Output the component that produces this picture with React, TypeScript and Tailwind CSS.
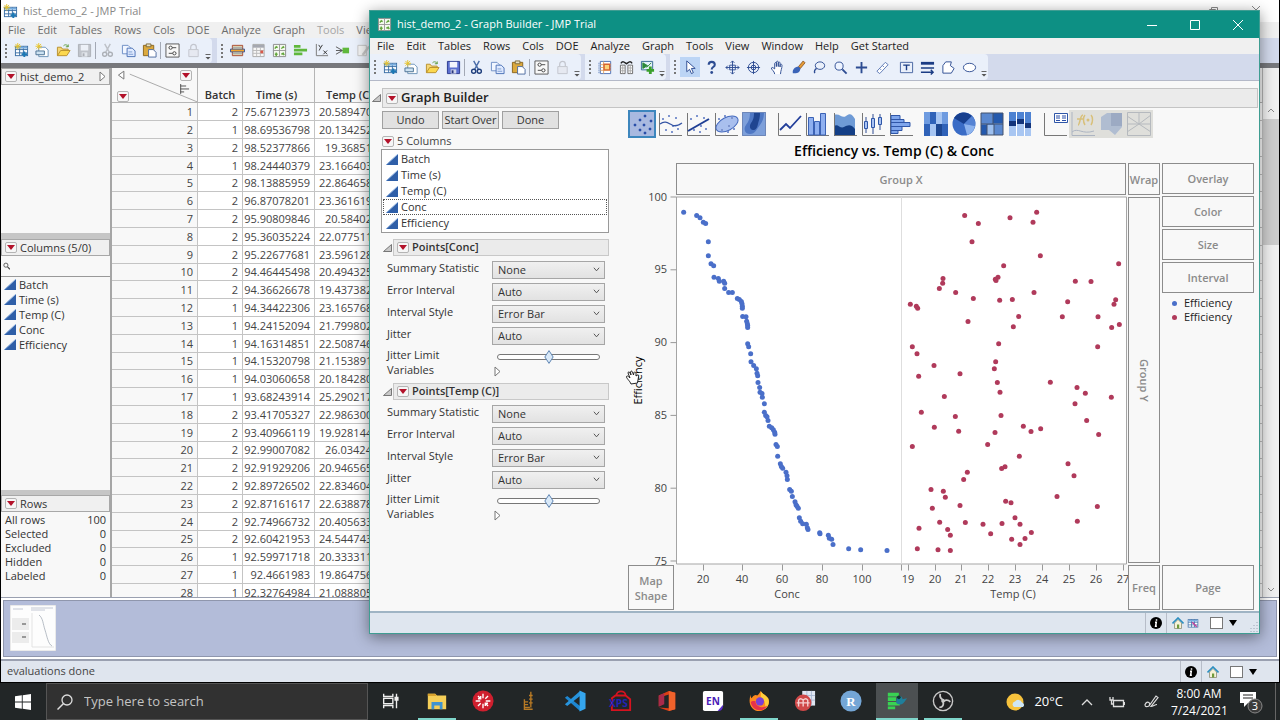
/**
 * JMP desktop: data table window with a Graph Builder window on top,
 * and the Windows taskbar below.
 */

import { clsx } from "clsx";
import type { ReactNode } from "react";

/* ------------------------------------------------------------------ data */

const COLUMNS = ["Batch", "Time (s)", "Temp (C)", "Conc", "Efficiency"];

const ROWS: [number, string, string][] = [
	[2, "75.67123973", "20.589470"],
	[1, "98.69536798", "20.134252"],
	[2, "98.52377866", "19.36851"],
	[1, "98.24440379", "23.166403"],
	[2, "98.13885959", "22.864658"],
	[2, "96.87078201", "23.361619"],
	[2, "95.90809846", "20.58402"],
	[2, "95.36035224", "22.077511"],
	[2, "95.22677681", "23.596128"],
	[2, "94.46445498", "20.494325"],
	[2, "94.36626678", "19.437382"],
	[1, "94.34422306", "23.165768"],
	[1, "94.24152094", "21.799802"],
	[1, "94.16314851", "22.508746"],
	[1, "94.15320798", "21.153891"],
	[1, "94.03060658", "20.184280"],
	[1, "93.68243914", "25.290217"],
	[2, "93.41705327", "22.986300"],
	[2, "93.40966119", "19.928144"],
	[2, "92.99007082", "26.03424"],
	[2, "92.91929206", "20.946565"],
	[2, "92.89726502", "22.834604"],
	[2, "92.87161617", "22.638878"],
	[2, "92.74966732", "20.405633"],
	[2, "92.60421953", "24.544743"],
	[1, "92.59971718", "20.333311"],
	[1, "92.4661983", "19.864756"],
	[1, "92.32764984", "21.088805"],
];

const ROW_COUNTS: [string, number][] = [
	["All rows", 100],
	["Selected", 0],
	["Excluded", 0],
	["Hidden", 0],
	["Labeled", 0],
];

const MENUS = ["File", "Edit", "Tables", "Rows", "Cols", "DOE", "Analyze", "Graph", "Tools", "View", "Window", "Help", "Get Started"];

// Marker positions, three units to a pixel, measured from the panel's corner.
const CONC_POINTS = [
	[41, 65], [80, 75], [90, 82], [100, 95], [107, 99], [115, 154], [115, 196], [123, 220], [131, 226],
	[132, 260], [145, 264], [148, 272], [161, 272], [164, 278], [164, 294], [176, 306], [187, 306],
	[202, 324], [208, 327], [214, 333], [216, 340], [217, 347], [217, 353], [218, 378], [228, 379],
	[230, 392], [232, 400], [233, 405], [233, 411], [233, 460], [236, 469], [242, 490], [243, 514],
	[251, 525], [259, 535], [261, 548], [263, 556], [264, 576], [269, 591], [270, 605], [276, 609],
	[277, 620], [283, 640], [283, 665], [287, 675], [291, 679], [294, 690], [298, 707], [305, 712],
	[310, 718], [314, 725], [315, 731], [318, 762], [322, 768], [323, 797], [331, 820], [334, 828],
	[338, 833], [348, 845], [351, 856], [352, 867], [359, 897], [364, 902], [367, 918], [375, 934],
	[378, 943], [381, 947], [385, 953], [388, 982], [392, 992], [398, 1000], [409, 1001], [412, 1012],
	[414, 1017], [449, 1027], [450, 1030], [475, 1034], [478, 1043], [485, 1046], [489, 1062],
	[536, 1075], [572, 1078], [651, 1080],
];

const TEMP_POINTS = [
	[209, 75], [250, 99], [345, 82], [414, 95], [425, 65], [231, 154], [436, 196], [326, 226], [671, 220],
	[144, 264], [143, 278], [133, 294], [182, 306], [309, 260], [301, 266], [303, 270], [541, 272],
	[588, 273], [417, 306], [235, 324], [314, 329], [352, 327], [518, 334], [662, 328], [657, 341],
	[46, 341], [64, 347], [68, 353], [371, 378], [502, 379], [609, 379], [219, 393], [355, 409],
	[673, 402], [650, 411], [52, 469], [311, 460], [608, 469], [66, 490], [302, 514], [117, 525],
	[298, 535], [195, 550], [71, 557], [307, 576], [466, 575], [546, 591], [315, 605], [571, 608],
	[148, 618], [649, 620], [540, 640], [79, 665], [318, 675], [181, 678], [575, 690], [118, 710],
	[385, 707], [437, 715], [191, 722], [300, 726], [408, 723], [611, 732], [52, 768], [278, 762],
	[373, 797], [519, 820], [320, 834], [330, 829], [217, 845], [537, 856], [206, 867], [108, 897],
	[145, 902], [151, 920], [486, 918], [332, 932], [348, 937], [195, 945], [607, 948], [112, 953],
	[360, 982], [134, 995], [211, 996], [264, 1001], [321, 999], [375, 1001], [547, 992], [72, 1013],
	[158, 1017], [287, 1030], [166, 1034], [409, 1026], [390, 1044], [350, 1046], [375, 1062],
	[67, 1075], [129, 1078], [166, 1080],
];

/* ----------------------------------------------------------- small parts */

function RedTriangle({ label }: { label: string }) {
	return (
		<button type="button" aria-label={label} className="flex h-[11px] w-[12px] shrink-0 items-center justify-center rounded-[2px] border border-[#b4b4b4] bg-[#f6f6f6]">
			<svg viewBox="0 0 8 5" className="h-[5px] w-[8px]">
				<path d="M0 0h8L4 5z" fill="#b3122a" />
			</svg>
		</button>
	);
}

function Continuous() {
	return (
		<svg viewBox="0 0 12 11" className="h-[11px] w-[12px] shrink-0">
			<path d="M0 11 12 0v11z" fill="#2f5fa8" />
			<path d="M0 11 12 0" stroke="#8fb0dc" />
		</svg>
	);
}

function Disclosure() {
	return (
		<svg viewBox="0 0 9 8" className="h-[8px] w-[9px] shrink-0">
			<path d="M.5 7.5h8V.5z" fill="#c9c9c9" stroke="#777" />
		</svg>
	);
}

function RightTriangle({ flip = false }: { flip?: boolean }) {
	return (
		<svg viewBox="0 0 7 11" className={clsx("h-[11px] w-[7px] shrink-0", flip && "rotate-180")}>
			<path d="M1 1v9l5-4.5z" fill="#fff" stroke="#777" />
		</svg>
	);
}

/* ---------------------------------------------------------- toolbar icons */

const Grid = (
	<>
		<rect x="1.5" y="3.5" width="13" height="10" fill="#fff" stroke="#3a6ea5" />
		<path d="M1.5 7h13M1.5 10.500h13M6 3.500v10M10 3.500v10" stroke="#3a6ea5" />
		<path d="M2 4h12v2H2z" fill="#78aee0" />
	</>
);
const Spark = <path d="M4 0v7M.5 3.500h7M1.500 1l5 5M6.500 1l-5 5" stroke="#e8c32c" />;

const GLYPHS: Record<string, ReactNode> = {
	newTable: <>{Grid}<path d="M11 9v6m-3-3h6" stroke="#1b78b5" strokeWidth="2" />{Spark}</>,
	newScript: (
		<>
			<path d="M4 4.500h7l3 3v7H4z" fill="#fff" stroke="#6d93b8" />
			<path d="M1 8.500h9v4H1z" fill="#cde2f2" stroke="#4b7193" />
			{Spark}
		</>
	),
	open: (
		<>
			<path d="M1.500 13.500v-9h4l1.500 2h6v3" fill="#f5d778" stroke="#b8902d" />
			<path d="M1.500 13.500 5 8h10l-3.500 5.500z" fill="#fbd84f" stroke="#b8902d" />
			<path d="M8 3c2-2 4-1 5 1m0 0V1.500M13 4h-2.500" stroke="#5a9a3a" />
		</>
	),
	save: (
		<>
			<path d="M1.500 1.500h13v13h-13z" fill="#5b6fd0" stroke="#2b3a8e" />
			<path d="M4 2h8v6H4z" fill="#f3f5fd" />
			<path d="M5 10h6v4.500H5z" fill="#cfd5ea" />
			<path d="M6 11h2v3H6z" fill="#27357c" />
		</>
	),
	cut: (
		<>
			<path d="m5 1 5 9M11 1 6 10" stroke="#4a6da8" strokeWidth="1.500" />
			<circle cx="5" cy="12" r="2.200" stroke="#1f3f7d" strokeWidth="1.500" />
			<circle cx="11" cy="12" r="2.200" stroke="#1f3f7d" strokeWidth="1.500" />
		</>
	),
	copy: (
		<>
			<path d="M1.500 2.500h6l2.500 2.500v6.500H1.500z" fill="#f1f6ff" stroke="#6c8cc4" />
			<path d="M6.500 5.500h5.500l3 3v6H6.500z" fill="#dfeaff" stroke="#4a70b5" />
			<path d="M8 9.500h4M8 12h5" stroke="#7c9bd0" />
		</>
	),
	paste: (
		<>
			<path d="M1.500 2.500h11v11h-11z" fill="#dba93e" stroke="#8a641d" />
			<path d="M4.500 1h5v3h-5z" fill="#e9e2c6" stroke="#7c6a3a" />
			<path d="M7 7h5l3 3v5H7z" fill="#fff" stroke="#4f6c9f" />
		</>
	),
	prefs: (
		<>
			<path d="M1 1h14v14H1z" fill="#f8f8f8" stroke="#555" />
			<path d="M4 5h8M4 11h8" stroke="#444" />
			<circle cx="6" cy="5" r="1.700" fill="#fff" stroke="#444" />
			<circle cx="10" cy="11" r="1.700" fill="#fff" stroke="#444" />
		</>
	),
	lock: (
		<>
			<path d="M5 7V4.500a3 3 0 0 1 6 0V7" stroke="#c3c6ce" strokeWidth="1.300" />
			<path d="M3 7h10v7.500H3z" fill="#e6e9f1" stroke="#c3c6ce" />
		</>
	),
	rows: (
		<>
			<path d="M2.500 2.500h11v11h-11z" fill="#f6e7b4" stroke="#a5452e" />
			<path d="M.500 6.500h15v3H.500z" fill="#f3a52d" stroke="#34549a" />
			<path d="M3 4.500h10M3 11.500h10" stroke="#8a93a8" />
		</>
	),
	calc: (
		<>
			<path d="M2 1.500h12v13H2z" fill="#f7f7f7" stroke="#a9a9a9" />
			<path d="M2 2h12v3H2z" fill="#a5a8b1" />
			<path d="M2 8h12M2 11h12M6 5v9M10 5v9" stroke="#bbb" />
			<path d="M10 8h3v3h-3z" fill="#d8594a" />
		</>
	),
	panels: (
		<>
			<path d="M1.500 1.500h13v13h-13z" fill="#f4f9ef" stroke="#8c8c8c" />
			<path d="M8 1v14M1 8h14" stroke="#999" />
			<path d="M3 6l1.500-2L6 5M10 6l2-2 1 1M3 12h3M4.500 10v4M10 12l2-1 1 2" stroke="#63a63d" strokeWidth="1.500" />
		</>
	),
	bars: <path d="M1 2h7v3H1zM1 6h14v3H1zM1 10h9v3H1z" fill="#5fb83c" />,
	yByX: (
		<>
			<path d="M2.500 1v12.500H15" stroke="#777" />
			<path d="m5 2 2 3 2-3M7 5 5.500 8M10 8l4 4M14 8l-4 4" stroke="#333" />
		</>
	),
	fan: (
		<>
			<path d="M1 4l7 4-7 4M1 8h7" stroke="#555" />
			<path d="M8 5h7v6H8z" fill="#5fb83c" />
		</>
	),
	pencil: (
		<>
			<path d="M2 2.500h9v11H2z" fill="#f4f4f4" stroke="#c4c4c4" />
			<path d="m6 12 7-9 2 1.500-7 9z" fill="#c8c8c8" />
		</>
	),
	summary: (
		<>
			<path d="M2.500 1.500h11v13h-11z" fill="#fff" stroke="#4b6fb3" />
			<path d="M2.500 5h11M2.500 8h11M2.500 11h11M6 1.500v13" stroke="#e0a86a" />
			<path d="M6.500 4.500h6v6h-6z" fill="#fbd27a" stroke="#d8632f" strokeWidth="1.500" />
			<path d="M1 3v11" stroke="#4b6fb3" strokeDasharray="1 1" />
		</>
	),
	columns: (
		<>
			<path d="M1.500 5.500h5v9h-5zM9.500 5.500h5v9h-5z" fill="#fff" stroke="#666" />
			<path d="M4 5.500v9M12 5.500v9M1.500 8.500h5M9.500 8.500h5M1.500 11.500h5M9.500 11.500h5" stroke="#aaa" />
			<path d="M2 3.500c2-3 4-1 6 .500 2-1.500 4-3.500 6-.500" stroke="#222" strokeWidth="1.500" />
		</>
	),
	addGraph: (
		<>
			<path d="M1.500 1.500h12v9h-12z" fill="#e4f2fb" stroke="#356a91" />
			<path d="m3 3 5 3-5 3zM12 3 7 8" fill="#2c8a3a" stroke="#2c8a3a" />
			<path d="M11 7v8M7 11h8" stroke="#3aa02c" strokeWidth="3" />
		</>
	),
	arrow: <path d="M4 1v11.500l3-2.500 2 4.500 2-1-2-4.500h4z" fill="#fff" stroke="#2d4c92" />,
	help: (
		<>
			<path d="M5 5c0-4 6.500-4 6.500 0 0 2.500-3.300 2.500-3.300 5" stroke="#2d4c92" strokeWidth="2.200" />
			<circle cx="8.200" cy="13.300" r="1.500" fill="#2d4c92" />
		</>
	),
	move: <path d="M8 1v14M1 8h14M6 3l2-2 2 2M6 13l2 2 2-2M3 6 1 8l2 2M13 6l2 2-2 2M5 5.500h6v5H5z" stroke="#2d4c92" />,
	target: (
		<>
			<circle cx="8" cy="8" r="5.500" stroke="#2d4c92" />
			<circle cx="8" cy="8" r="2.500" stroke="#2d4c92" />
			<path d="M8 1v14M1 8h14" stroke="#2d4c92" />
		</>
	),
	hand: <path d="M5 15c0-3-4-5-3.500-6.500C2.500 7 4 9 5 9.500V3.500c.500-1 1.500-1 1.800 0V7 2c.500-1 1.700-1 2 0v5V3c.500-1 1.700-1 1.900 0v4.500l.200-2.500c.700-1 1.700-.500 1.900.500 0 4-1.300 5-1.600 9.500" fill="#fff" stroke="#2d4c92" />,
	brush: (
		<>
			<path d="m8 7 5-6 2 2-5 6z" fill="#e59b36" stroke="#7d4a1c" strokeWidth=".800" />
			<path d="M2 14c-1-3 2-7 6-7l2 2c0 4-4 6-8 5z" fill="#3b64b8" />
		</>
	),
	lasso: (
		<>
			<ellipse cx="8.500" cy="6" rx="5" ry="4" stroke="#2d4c92" />
			<path d="M5 9c-2 1-3 3-2 5" stroke="#2d4c92" strokeWidth="1.500" />
		</>
	),
	zoom: (
		<>
			<circle cx="6.500" cy="6.500" r="4.300" fill="#eef4ff" stroke="#2d4c92" />
			<path d="m10 10 4.500 4.500" stroke="#2d4c92" strokeWidth="2" />
		</>
	),
	plus: <path d="M8 2v12M2 8h12" stroke="#2d4c92" strokeWidth="2" />,
	ruler: <path d="m2 12 9-9.500 3 2.500-9 9.500zM5 9l1.500 1.500M8 6l1.500 1.500" fill="#fff" stroke="#5c79b5" />,
	line: (
		<>
			<path d="M1 2h14v3H1z" fill="#1b3c84" />
			<path d="M1 8.500h14M1 13h13m-2.500-2.500L14 13l-2.500 2.500" stroke="#1b3c84" strokeWidth="1.500" />
		</>
	),
	polygon: <path d="M2 14V6l3-4h6l-1 4 4 3-3 5z" fill="#fff" stroke="#2d4c92" />,
	ellipse: <ellipse cx="8" cy="8" rx="6.500" ry="4.500" fill="#fff" stroke="#2d4c92" />,
	textBox: (
		<>
			<path d="M1.500 2.500h13v11h-13z" fill="#eaf0fb" stroke="#4563a0" />
			<path d="M4.500 5.500h7M8 5.500V11" stroke="#1b3c84" strokeWidth="1.500" />
		</>
	),
};

function Glyph({ name, faded = false }: { name: string; faded?: boolean }) {
	return (
		<svg viewBox="0 0 16 16" fill="none" className={clsx("h-[15px] w-[15px]", faded && "opacity-35 grayscale")}>
			{GLYPHS[name]}
		</svg>
	);
}

function Tool({ name, faded, active }: { name: string; faded?: boolean; active?: boolean }) {
	return (
		<button
			type="button"
			aria-label={name}
			className={clsx("flex h-[20px] w-[20px] shrink-0 items-center justify-center", active && "bg-[#bcd5f5]")}
		>
			<Glyph name={name} faded={faded} />
		</button>
	);
}

function ToolStrip({ children }: { children: ReactNode }) {
	return (
		<div className="flex h-full shrink-0 items-center gap-px rounded-r bg-[#eaf0fa] pl-[3px]">
			<svg viewBox="0 0 4 14" className="mr-[2px] h-[14px] w-[4px]">
				<path d="M2 0v14" stroke="#777" strokeWidth="2" strokeDasharray="2 2" />
			</svg>
			{children}
			<svg viewBox="0 0 8 8" className="mb-[2px] h-[8px] w-[8px] self-end">
				<path d="M1.500 1.500h5" stroke="#666" />
				<path d="M1.500 4h5L4 6.500z" fill="#555" />
			</svg>
		</div>
	);
}

function Divider() {
	return <span className="h-[17px] w-px shrink-0 bg-[#a3a9b5]" />;
}

function FileTools({ faded = false }: { faded?: boolean }) {
	return (
		<ToolStrip>
			<Tool name="newTable" />
			<Tool name="newScript" />
			<Tool name="open" />
			<Tool name="save" faded={faded} />
			<Divider />
			<Tool name="cut" faded={faded} />
			<Tool name="copy" />
			<Tool name="paste" />
			<Divider />
			<Tool name="prefs" />
			<Tool name="lock" />
		</ToolStrip>
	);
}

function MenuBar({ menus, dimmed = false }: { menus: string[]; dimmed?: boolean }) {
	return (
		<nav className={clsx("flex h-[16px] shrink-0 items-center gap-[12px] overflow-hidden bg-[#f0f0f0] px-[7px] text-[11px]", dimmed ? "text-[#6d6d6d]" : "text-[#222]")}>
			{menus.map((m) => (
				<button key={m} type="button" className={clsx("shrink-0", dimmed && m === "Tools" && "text-[#a5a5a5]")}>
					{m}
				</button>
			))}
		</nav>
	);
}

function StatusIcons({ withTable = false }: { withTable?: boolean }) {
	return (
		<div className="flex h-full items-center">
			<span className="flex h-full w-[22px] items-center justify-center border-x border-[#b7bdc8]">
				<svg viewBox="0 0 12 12" className="h-[12px] w-[12px]">
					<circle cx="6" cy="6" r="6" fill="#000" />
					<path d="M6.500 2.200v1.600M5 5.200h1.300L5.600 9.300h1.300" stroke="#fff" strokeWidth="1.500" fill="none" />
				</svg>
			</span>
			<svg viewBox="0 0 12 12" className="ml-[5px] h-[12px] w-[12px]">
				<path d="M2.500 6v5.500h7V6L6 2.500z" fill="#f5f2d8" stroke="#8b8d76" strokeWidth=".800" />
				<path d="M.500 6.500 6 1l5.500 5.500" fill="none" stroke="#2d8fc0" strokeWidth="1.600" />
				<path d="M5 7.500h2.200v4H5z" fill="#6e9a3a" />
			</svg>
			{withTable && (
				<svg viewBox="0 0 16 16" fill="none" className="ml-[3px] h-[12px] w-[12px]">
					{Grid}
					<path d="m7 7 6 6" stroke="#c2409a" strokeWidth="2" />
				</svg>
			)}
			<span className="ml-[11px] h-[12px] w-[13px] border border-[#777] bg-white" />
			<svg viewBox="0 0 8 6" className="ml-[6px] h-[6px] w-[8px]">
				<path d="M0 0h8L4 6z" />
			</svg>
		</div>
	);
}

/* ------------------------------------------------------ data table window */

function PanelHeader({ title, children }: { title: string; children?: ReactNode }) {
	return (
		<div className="flex h-[17px] shrink-0 items-center gap-[3px] border border-[#a8a8a8] bg-[#f0f0f0] px-[3px] text-[#333]">
			<RedTriangle label={`${title} menu`} />
			<span className="flex-1">{title}</span>
			{children}
		</div>
	);
}

function SidePanels() {
	return (
		<aside className="flex w-[111px] shrink-0 flex-col border-r-2 border-[#a6a6a6] bg-[#f8f8f8] text-[11px] leading-[14px] text-[#333]">
			<section className="h-[165px] shrink-0">
				<PanelHeader title="hist_demo_2">
					<RightTriangle />
				</PanelHeader>
			</section>
			<section className="flex min-h-0 flex-1 flex-col border-t-[6px] border-[#c6c6c6]">
				<PanelHeader title="Columns (5/0)" />
				<label className="flex h-[21px] items-center border-b border-[#999] pl-[2px]">
					<svg viewBox="0 0 9 9" fill="none" stroke="#444" className="h-[8px] w-[8px]">
						<circle cx="3.500" cy="3.500" r="2.500" />
						<path d="m5.500 5.500 3 3" strokeWidth="1.500" />
					</svg>
					<input aria-label="Filter columns" className="w-full bg-transparent outline-none" />
				</label>
				<ul>
					{COLUMNS.map((c) => (
						<li key={c} className="flex h-[15px] items-center gap-[3px] pl-[3px]">
							<Continuous />
							{c}
						</li>
					))}
				</ul>
			</section>
			<section className="h-[107px] shrink-0 border-t-[5px] border-[#c6c6c6]">
				<PanelHeader title="Rows" />
				<dl className="px-[4px] pt-px">
					{ROW_COUNTS.map(([k, n]) => (
						<div key={k} className="flex justify-between">
							<dt>{k}</dt>
							<dd>{n}</dd>
						</div>
					))}
				</dl>
			</section>
		</aside>
	);
}

function DataGrid() {
	const head = "h-[35px] border-b border-r border-[#b5b5b5] bg-[#f8f8f8] p-0 align-bottom font-semibold";
	const cell = "border-b border-r border-[#c4c4c4] py-0 text-right";
	return (
		<div className="min-w-0 flex-1 overflow-hidden bg-white">
			<table className="w-full table-fixed border-separate border-spacing-0 text-[11px] leading-[14px] text-[#444]">
				<colgroup>
					<col className="w-[86px]" />
					<col className="w-[45px]" />
					<col className="w-[72px]" />
					<col />
				</colgroup>
				<thead className="text-[#333]">
					<tr>
						<th className={head}>
							<div className="relative h-[34px]">
								<svg viewBox="0 0 86 34" className="absolute inset-0 h-full w-full" fill="none">
									<path d="M18 6 86 34" stroke="#aaa" />
									<path d="M12 3v8L6.500 7z" fill="#fff" stroke="#777" />
									<path d="M69.500 16v10M69 18h6M69 21h9M69 24h4" stroke="#555" />
								</svg>
								<span className="absolute left-[68px] top-[2px] flex"><RedTriangle label="Columns menu" /></span>
								<span className="absolute bottom-0 left-[5px] flex"><RedTriangle label="Rows menu" /></span>
							</div>
						</th>
						<th className={head}>Batch</th>
						<th className={clsx(head, "pr-[4px]!")}>Time (s)</th>
						<th className={clsx(head, "pl-[11px]! text-left")}>Temp (C)</th>
					</tr>
				</thead>
				<tbody>
					{ROWS.map(([batch, time, temp], i) => (
						<tr key={time} className="h-[18px] nth-[5n]:h-[17px]">
							<td className={clsx(cell, "bg-[#f8f8f8] pr-[4px]")}>{i + 1}</td>
							<td className={clsx(cell, "pr-[4px]")}>{batch}</td>
							<td className={clsx(cell, "pr-[4px]")}>{time}</td>
							<td className={clsx(cell, "text-left!", temp.length < 9 ? "pl-[10px]" : "pl-[4px]")}>{temp}</td>
						</tr>
					))}
				</tbody>
			</table>
		</div>
	);
}

function ScrollBar() {
	return (
		<div className="flex w-[16px] shrink-0 flex-col items-center bg-[#f0f0f0] pt-[40px] pb-[5px]">
			<svg viewBox="0 0 8 5" fill="none" className="h-[5px] w-[8px]"><path d="m1 4 3-3 3 3" stroke="#888" /></svg>
			<span className="mt-[6px] h-[126px] w-full bg-[#cdcdcd]" />
			<svg viewBox="0 0 8 5" fill="none" className="mt-auto h-[5px] w-[8px]"><path d="m1 1 3 3 3-3" stroke="#888" /></svg>
		</div>
	);
}

function TableWindow() {
	return (
		<section className="flex min-h-0 flex-1 flex-col border-x border-black bg-white">
			<header className="flex h-[22px] shrink-0 items-center gap-[5px] pl-[2px] text-[11px] text-[#888]">
				<Glyph name="newTable" />
				<h1>hist_demo_2 - JMP Trial</h1>
				<svg viewBox="0 0 54 12" fill="none" stroke="#888" className="mr-[17px] ml-auto h-[12px] w-[54px]">
					<path d="M1.500 4.500h6v6h-6zM3.500 4V2.500h6v6H8M44 1l8 8M52 1l-8 8" />
				</svg>
			</header>
			<MenuBar menus={MENUS.slice(0, 10)} dimmed />
			<div className="flex h-[25px] shrink-0 items-center gap-[5px] overflow-hidden bg-[#d3daec]">
				<FileTools faded />
				<ToolStrip>
					<Tool name="rows" />
					<Tool name="calc" />
					<Tool name="panels" />
					<Tool name="bars" />
					<Tool name="yByX" />
					<Tool name="fan" />
					<Tool name="pencil" />
				</ToolStrip>
			</div>
			<div className="h-[5px] shrink-0 bg-[#77787c]" />
			<div className="flex min-h-0 flex-1">
				<SidePanels />
				<DataGrid />
				<ScrollBar />
			</div>
			<div className="h-[63px] shrink-0 border-y border-[#9aa0b0] bg-white p-[2px]">
				<div className="h-full border border-[#8f96ad] bg-[#b3bcd9] px-[6px] py-[4px]">
					<svg viewBox="0 0 46 46" className="h-[46px] w-[46px]">
						<path d="M0 0h46v46H0z" fill="#fdfdfd" stroke="#d6d6d6" />
						<path d="M2 13h17v12H2zM2 27h17v11H2z" fill="#ececec" />
						<path d="M22 8v34h22" fill="none" stroke="#e3e3e3" />
						<path d="M3 4h10M21 3h22M21 5h14" stroke="#c3c8d4" />
						<path d="M12 19h4M12 32h4" stroke="#444" />
						<path d="M29 10c4 3 4 9 6 15s3 14 7 16" fill="none" stroke="#9aa2ae" strokeWidth=".700" />
					</svg>
				</div>
			</div>
			<footer className="flex h-[22px] shrink-0 items-center justify-between border-t border-[#9aa0b0] bg-[#dfe5ee] pr-[22px] pl-[6px] text-[11px] text-[#444]">
				<span>evaluations done</span>
				<StatusIcons />
			</footer>
		</section>
	);
}

/* --------------------------------------------------- graph element palette */

const AXES = <path d="M1.500 1v22.500H24" fill="none" stroke="#777" />;
const DOTS = <path d="M4 6h2v2H4zM10 3h2v2h-2zM17 5h2v2h-2zM7 17h2v2H7zM14 13h2v2h-2zM19 16h2v2h-2zM13 19h2v2h-2z" fill="#7f95cf" />;

const PALETTE: ReactNode[][] = [
	[
		<path d="M4 12h2v2H4zM9 7h2v2H9zM14 3h2v2h-2zM20 8h2v2h-2zM13 12h2v2h-2zM9 17h2v2H9zM19 16h2v2h-2zM14 20h2v2h-2z" fill="#2b4fa8" stroke="#2b4fa8" strokeWidth=".500" />,
		<>{AXES}{DOTS}<path d="M2 12c5-4 8-1 12 1s7 0 10-2" fill="none" stroke="#3555a5" strokeWidth="1.300" /></>,
		<>{AXES}{DOTS}<path d="M2 19 23 7" stroke="#1f3f94" strokeWidth="2" /></>,
		<>{AXES}<ellipse cx="13" cy="12" rx="12" ry="6.500" transform="rotate(-28 13 12)" fill="#a9bfee" stroke="#4469bd" />{DOTS}</>,
		<>
			<path d="M0 0h24v24H0z" fill="#7ea0da" />
			<path d="M8 0h14c0 5-1 9-4 13s-5 9-10 9-7-5-4-9 4-7 4-13z" fill="#4f78c4" />
			<path d="M12 1h6c0 5-1 7-2 11s-2 6-5 6-4-4-2-7 3-5 3-10z" fill="#1f4590" />
			<path d="M.500.500h23v23H.500z" fill="none" stroke="#6e87b8" />
		</>,
	],
	[
		<>{AXES}<path d="m3 18 6-6 4 4L24 4" fill="none" stroke="#233f9a" strokeWidth="1.800" /></>,
		<>{AXES}<path d="M3.500 5.500h5V23h-5zM9.500 9.500h5V23h-5zM15.500 1.500h5V23h-5z" fill="#8fb0f0" stroke="#3b62b5" /></>,
		<>
			<path d="M1 3c6-2 8 4 12 1s6-2 9 3v17H1z" fill="#6f9bd6" />
			<path d="M1 14c4-3 6 3 10 1s7-3 11 2v7H1z" fill="#143f86" />
			{AXES}
		</>,
		<>
			{AXES}
			<path d="M5 5v16M12 2v20M19 2v16" stroke="#2f4c93" />
			<path d="M3.500 9.500h3v7h-3zM10.500 6.500h3v9h-3zM17.500 5.500h3v7h-3z" fill="#a9c3f3" stroke="#2f56a8" />
		</>,
		<>{AXES}<path d="M2 3.500h9v4H2zM2 7.500h13v3H2zM2 10.500h19v4H2zM2 14.500h11v4H2zM2 18.500h7v3H2z" fill="#7fa6ec" stroke="#2f56a8" /></>,
	],
	[
		<>
			<path d="M0 0h24v24H0z" fill="#6e9be0" />
			<path d="M6 0h6v12H6zM0 12h6v12H0zM18 12h6v12h-6z" fill="#2f62b8" />
			<path d="M12 0h6v12h-6zM6 12h6v12H6z" fill="#a6c5f2" />
			<path d="M12 12h6v12h-6z" fill="#1d4791" />
		</>,
		<>
			<circle cx="12" cy="12" r="11.500" fill="#3a6cc6" />
			<path d="M12 12 2 6a11.500 11.500 0 0 1 18-2z" fill="#173f8e" />
			<path d="m12 12 8-8a11.500 11.500 0 0 1 3 10z" fill="#5583d4" />
			<path d="m12 12 11 2a11.500 11.500 0 0 1-8 9z" fill="#8db3ee" />
		</>,
		<>
			<path d="M1 1h22v22H1z" fill="#5a88cf" />
			<path d="M13 1h10v10H13zM1 13h6v10H1z" fill="#2459ad" />
			<path d="M7 13h7v10H7z" fill="#9ec0ef" />
			<path d="M1 12h22M13 1v11M7 12v11M14 12v11M1 1h22v22H1z" fill="none" stroke="#45526c" />
		</>,
		<>
			<path d="M1 0h22v24H1z" fill="#a8c6f2" />
			<path d="M1 0h7v9H1zM9 0h7v7H9zM17 0h6v11h-6z" fill="#4d82d2" />
			<path d="M1 9h7v5H1zM9 7h7v5H9zM17 11h6v5h-6z" fill="#13347a" />
			<path d="M8.500 0v24M16.500 0v24" stroke="#fff" />
		</>,
	],
	[
		<>
			{AXES}
			<path d="M11.500 1.500h13v9h-13z" fill="#fff" stroke="#2f56a8" />
			<path d="M13 4h4M19 4h4M13 6h4M19 6h4M13 8.500h4M19 8.500h4" stroke="#2b4fa8" />
		</>,
		<g opacity=".550">
			<path d="M7 13C9 13 9 3 12 3M6 7h6M14 3c-2 2-2 7 0 10M20 3c2 2 2 7 0 10" fill="none" stroke="#d3a72c" strokeWidth="1.500" />
			<circle cx="17" cy="8" r="1.500" fill="#d3a72c" />
			<path d="M1 20c6-5 10 3 22-1M1 0v23.500h23" fill="none" stroke="#8492ad" />
		</g>,
		<g opacity=".600">
			<path d="M2 5 8 1h15v14l-7 8-6-5H2z" fill="#92a7cc" />
			<path d="M12 1h11v13H12z" fill="#7088b4" />
		</g>,
		<path d="M.500.500h23v23H.500zM0 4l12 8L24 3M0 20l12-8 12 8M12 0v12M0 12h24" fill="none" stroke="#b5b9be" />,
	],
];

function ElementPalette() {
	return (
		<div className="flex h-[28px] gap-[7px]">
			{PALETTE.map((group, g) => (
				<div key={g} className="flex">
					{group.map((art, i) => (
						<button
							key={i}
							type="button"
							disabled={g === 3 && i > 0}
							aria-label={`Graph element ${g + 1}.${i + 1}`}
							className={clsx(
								"flex h-[28px] w-[28px] items-center justify-center",
								g === 0 && i === 0 && "border-2 border-[#3d86bd] bg-[#a9b9e0]",
								g === 3 && i > 0 && "bg-[#dfdfdb]",
							)}
						>
							<svg viewBox="0 0 25 25" className="h-[25px] w-[25px] shrink-0">{art}</svg>
						</button>
					))}
				</div>
			))}
		</div>
	);
}

/* ---------------------------------------------------- Graph Builder window */

const STATISTICS: [string, string[]][] = [
	["Summary Statistic", ["None", "Mean", "Median"]],
	["Error Interval", ["Auto", "None"]],
	["Interval Style", ["Error Bar", "Band"]],
	["Jitter", ["Auto", "None"]],
];

function PointsOptions({ title }: { title: string }) {
	return (
		<section className="mb-[4px] text-[11px] text-[#333]">
			<div className="flex items-center gap-px pl-[1px]">
				<Disclosure />
				<h3 className="flex h-[17px] flex-1 items-center gap-[3px] border border-[#c8c8c8] bg-[#ebebeb] pl-[3px] font-semibold">
					<RedTriangle label={`${title} menu`} />
					{title}
				</h3>
			</div>
			<div className="pt-[3px] pl-[5px]">
				<div className="mb-[3px]">
					{STATISTICS.map(([label, options]) => (
						<label key={label} className="flex h-[22px] items-center">
							<span className="w-[105px] pb-[3px]">{label}</span>
							<span className="relative flex">
								<select className="h-[18px] w-[113px] appearance-none border border-[#a6a6a6] bg-linear-to-b from-[#f0f0f0] to-[#e2e2e2] pl-[5px] text-[11px]">
									{options.map((o) => <option key={o}>{o}</option>)}
								</select>
								<svg viewBox="0 0 8 5" fill="none" stroke="#444" className="pointer-events-none absolute top-[6px] right-[5px] h-[5px] w-[7px]">
									<path d="m1 .500 3 3.500L7 .500" />
								</svg>
							</span>
						</label>
					))}
				</div>
				<label className="flex h-[13px] items-center">
					<span className="w-[110px] pb-[3px]">Jitter Limit</span>
					<input
						type="range"
						defaultValue={50}
						className="h-[6px] w-[103px] appearance-none rounded-full border border-[#777] bg-white [&::-webkit-slider-thumb]:h-[10px] [&::-webkit-slider-thumb]:w-[10px] [&::-webkit-slider-thumb]:appearance-none [&::-webkit-slider-thumb]:border [&::-webkit-slider-thumb]:border-[#5a7fae] [&::-webkit-slider-thumb]:bg-[#d9e9f8] [&::-webkit-slider-thumb]:[transform:scaleX(0.65)_rotate(45deg)]"
					/>
				</label>
				<div className="flex h-[16px] items-center">
					<span className="w-[107px] pb-px">Variables</span>
					<button type="button" aria-label={`${title} variables`}><RightTriangle /></button>
				</div>
			</div>
		</section>
	);
}

function ControlPanel() {
	return (
		<div className="w-[229px] shrink-0 pt-[3px]">
			<div className="flex gap-[3px] pl-[2px]">
				{["Undo", "Start Over", "Done"].map((b) => (
					<button key={b} type="button" className="h-[18px] w-[57px] border border-[#a0a0a0] bg-[#e1e1e1] text-[11px] leading-[14px] whitespace-nowrap text-[#333]">
						{b}
					</button>
				))}
			</div>
			<div className="mt-[4px] flex h-[16px] items-center gap-[3px] pl-[2px] text-[11px] text-[#444]">
				<RedTriangle label="Columns menu" />
				5 Columns
			</div>
			<ul className="mb-[6px] ml-px border border-[#999] bg-white p-px text-[11px] text-[#333]">
				{COLUMNS.map((c) => (
					<li key={c} className={clsx("flex h-[16px] items-center gap-[3px] border border-dotted pl-[2px]", c === "Conc" ? "border-[#555]" : "border-transparent")}>
						<Continuous />
						{c}
					</li>
				))}
			</ul>
			<div className="pl-[2px]">
				<PointsOptions title="Points[Conc]" />
				<PointsOptions title="Points[Temp (C)]" />
			</div>
		</div>
	);
}

function DropZone({ label, className }: { label: string; className?: string }) {
	return (
		<button type="button" className={clsx("flex items-center justify-center border border-[#8c8c8c] bg-[#f8f8f8] text-center text-[11px] leading-[15px] font-semibold text-[#8b8b8b]", className)}>
			{label}
		</button>
	);
}

function YAxis() {
	return (
		<div className="relative">
			<svg viewBox="0 0 46 365" className="h-full w-full overflow-visible text-[11px]" fill="#444">
				{[100, 95, 90, 85, 80, 75].map((v, i) => (
					<g key={v}>
						<path d={`M42.500 ${i * 72.800 - 0.500}h6`} stroke="#999" />
						<text x="39" y={i * 72.800 + 3} textAnchor="end">{v}</text>
					</g>
				))}
				<text x="0" y="0" transform="translate(14 183) rotate(-90)" textAnchor="middle" fill="#000">Efficiency</text>
			</svg>
			<svg viewBox="0 0 16 18" className="absolute top-[172px] left-[-3px] h-[18px] w-[16px]">
				<path d="M6 15C5 12 1 9 1.500 7.500S4 8 5 9L3 4c0-1.500 1.500-1.500 2 0L6 6 5.500 3c.500-1.500 1.500-1 2 0L8.500 6l.500-2.500c.500-1 1.500-.500 2 .500L11 7l1.500-1c1 0 1 1 1 2l-1 6z" fill="#fff" stroke="#222" />
			</svg>
		</div>
	);
}

function Markers({ points, left, color }: { points: number[][]; left: number; color: string }) {
	return (
		<g fill={color}>
			{points.map(([x, y], i) => (
				<circle key={i} cx={left + x / 3} cy={y / 3 - 7} r="2.500" />
			))}
		</g>
	);
}

const CONC_TICKS: [number, string][] = [[27, "20"], [66, "40"], [106, "60"], [146, "80"], [186, "100"]];
const TEMP_TICKS: [number, string][] = [
	[232, "19"], [259, "20"], [285, "21"], [312, "22"], [339, "23"], [366, "24"], [393, "25"], [420, "26"], [447, "27"],
];

function Plot() {
	return (
		<svg viewBox="0 0 450 412" className="row-span-2 h-full w-full overflow-visible text-[11px]" fill="#444">
			<path d="M.500-.500h450v367H.500z" fill="#fff" stroke="#a5a5a5" />
			<path d="M225.500 0v366" stroke="#dedede" />
			<path d="M225.500 367v6" stroke="#999" />
			{[...CONC_TICKS, ...TEMP_TICKS].map(([x, label]) => (
				<g key={x}>
					<path d={`M${x + 0.5} 367v6`} stroke="#999" />
					<text x={x} y="385" textAnchor="middle">{label}</text>
				</g>
			))}
			<text x="111" y="400" textAnchor="middle">Conc</text>
			<text x="337" y="400" textAnchor="middle">Temp (C)</text>
			<Markers points={CONC_POINTS} left={-6} color="#4a6fc9" />
			<Markers points={TEMP_POINTS} left={219} color="#b03a5b" />
		</svg>
	);
}

function GraphArea() {
	return (
		<div className="flex min-w-0 flex-1 flex-col pt-[2px] pr-[5px] pb-[1px]">
			<ElementPalette />
			<h2 className="mr-[94px] flex h-[25px] shrink-0 items-center justify-center text-[14px] font-semibold text-black">
				Efficiency vs. Temp (C) &amp; Conc
			</h2>
			<div className="grid min-h-0 flex-1 grid-cols-[46px_1fr_32px_92px] grid-rows-[32px_1fr_45px] gap-[2px]">
				<span />
				<DropZone label="Group X" />
				<DropZone label="Wrap" />
				<div className="row-span-2 flex flex-col gap-[2px]">
					{["Overlay", "Color", "Size", "Interval"].map((z) => (
						<DropZone key={z} label={z} className="h-[31px] shrink-0" />
					))}
					<ul className="pt-px text-[11px] leading-[14px] text-[#222]">
						{["bg-[#4a6fc9]", "bg-[#b03a5b]"].map((dot) => (
							<li key={dot} className="flex items-center gap-[7px] pl-[10px]">
								<span className={clsx("h-[5px] w-[5px] rounded-full", dot)} />
								Efficiency
							</li>
						))}
					</ul>
				</div>
				<YAxis />
				<Plot />
				<DropZone label="Group Y" className="[writing-mode:vertical-rl]" />
				<DropZone label="Map Shape" className="z-10" />
				<DropZone label="Freq" />
				<DropZone label="Page" />
			</div>
		</div>
	);
}

function GraphBuilderWindow() {
	return (
		<section className="absolute top-[10px] right-[20px] bottom-[86px] left-[369px] flex flex-col border border-[#3f9d92] bg-[#f8f8f8] shadow-[0_3px_14px_rgba(0,0,0,0.45)]">
			<header className="flex h-[27px] shrink-0 items-center gap-[5px] bg-[#0d9084] pl-[7px] text-[11px] text-white">
				<Glyph name="panels" />
				<h1>hist_demo_2 - Graph Builder - JMP Trial</h1>
				<div className="mr-[15px] ml-auto flex gap-[31px]">
					{["M1 6.500h10", "M1.500 1.500h9v9h-9z", "m1 1 10 10M11 1 1 11"].map((d, i) => (
						<button key={d} type="button" aria-label={["Minimize", "Maximize", "Close"][i]}>
							<svg viewBox="0 0 12 12" fill="none" stroke="#fff" className="h-[12px] w-[12px]"><path d={d} /></svg>
						</button>
					))}
				</div>
			</header>
			<MenuBar menus={MENUS} />
			<div className="flex h-[27px] shrink-0 items-center gap-[4px] border-b border-[#b4b9c8] bg-[#d3daec]">
				<FileTools />
				<ToolStrip>
					<Tool name="summary" />
					<Tool name="columns" />
					<Tool name="addGraph" />
				</ToolStrip>
				<ToolStrip>
					<Tool name="arrow" active />
					<Tool name="help" />
					<Tool name="move" />
					<Tool name="target" />
					<span className="w-[2px]" />
					<Tool name="hand" />
					<Tool name="brush" />
					<Tool name="lasso" />
					<Tool name="zoom" />
					<Tool name="plus" />
					<Tool name="ruler" />
					<span className="w-[2px]" />
					<Tool name="textBox" />
					<Tool name="line" />
					<Tool name="polygon" />
					<Tool name="ellipse" />
				</ToolStrip>
			</div>
			<div className="mt-[7px] flex shrink-0 items-center gap-px pr-px pl-[2px]">
				<Disclosure />
				<h2 className="flex h-[20px] flex-1 items-center gap-[3px] border border-[#c4c4c4] bg-[#ebebeb] pl-[3px] text-[13px] font-semibold text-[#222]">
					<RedTriangle label="Graph Builder menu" />
					Graph Builder
				</h2>
			</div>
			<div className="flex min-h-0 flex-1 gap-[19px] pl-[10px]">
				<ControlPanel />
				<GraphArea />
			</div>
			<footer className="flex h-[22px] shrink-0 items-center justify-end border-t-2 border-[#9fb4c4] bg-[#dfe6ef]">
				<StatusIcons withTable />
				<svg viewBox="0 0 12 12" className="ml-[10px] h-[12px] w-[12px] self-end" stroke="#9aa4b4" strokeDasharray="1 2">
					<path d="M10 1v10M7 4v7M4 7v4" />
				</svg>
			</footer>
		</section>
	);
}

/* ---------------------------------------------------------------- taskbar */

const APPS: { name: string; open?: boolean; active?: boolean; art: ReactNode }[] = [
	{
		name: "Task view",
		art: <path d="M4 4v3h10V4M4 20v-3h10v3M4 9h10v6H4zM18 4v16M16.500 8h3v3h-3z" fill="none" stroke="#eee" strokeWidth="1.500" />,
	},
	{
		name: "File Explorer",
		open: true,
		art: (
			<>
				<path d="M2 4h8l2 2h10v15H2z" fill="#f6cf58" />
				<path d="M2 4h8l1.500 2.500H2z" fill="#d9a32e" />
				<path d="M6 13h12v8h-3v-4H9v4H6z" fill="#3f93d0" />
			</>
		),
	},
	{
		name: "Mathematica",
		art: (
			<>
				<circle cx="12" cy="12" r="11.500" fill="#cf1f2e" />
				<path d="M12 4v5M12 15v5M4 12h5M15 12h5M6.500 6.500l3 3M14.500 14.500l3 3M17.500 6.500l-3 3M9.500 14.500l-3 3M9.500 6.500v3h-3M14.500 17.500v-3h3" stroke="#fff" strokeWidth="1.500" fill="none" />
			</>
		),
	},
	{
		name: "Terminal",
		art: <path d="M7 10v11h9M7 13h4M7 16h4M7 19h6M14 2v17M12 6h4M12 10h4M12 14h4" fill="none" stroke="#b87a25" strokeWidth="1.500" />,
	},
	{
		name: "Visual Studio Code",
		art: (
			<>
				<path d="M1 8.500 3.500 6.500 17.500 17.500V23z" fill="#1e86d0" />
				<path d="M1 15.500 3.500 17.500 17.500 6.500V1z" fill="#2794dd" />
				<path d="M17 .500 23.500 3.500v17L17 23.500z" fill="#35a6ee" />
			</>
		),
	},
	{
		name: "XPS viewer",
		art: (
			<>
				<path d="M2 22V9l4-3h11l5 4v12zM7 6c0-6 10-6 10 0" fill="none" stroke="#d6121f" strokeWidth="2" />
				<text x="-1" y="19" className="text-[11px] font-bold" fill="#2323b8">XPS</text>
			</>
		),
	},
	{
		name: "Office",
		art: (
			<>
				<path d="M3 6 14 1l7 2v18l-7 2-11-4 11 1V5L7 7v9l-4 2z" fill="#dc3e15" />
				<path d="m14 1 7 2v18l-7 2z" fill="#f0622b" />
				<path d="M3 6 9 3.500v12L3 18z" fill="#a92a4b" />
			</>
		),
	},
	{
		name: "EndNote",
		art: (
			<>
				<path d="M1 3q0-2 2-2h18q2 0 2 2v14l-5 6H3q-2 0-2-2z" fill="#fff" />
				<path d="m23 16-6 7q6 0 6-7z" fill="#5b2bd0" />
				<text x="12" y="16" textAnchor="middle" className="text-[11px] font-bold" fill="#4a20b8">EN</text>
			</>
		),
	},
	{
		name: "Firefox",
		open: true,
		art: (
			<>
				<path d="M3 5c0 2 0 3 1 4C6 5 9 5 10 6c2-1 3-4 4-5 1 3 5 4 8 8 3 7-3 14-10 14S-1 16 3 5z" fill="#ff8a1f" />
				<path d="M14 1c1 3 5 4 8 8 2 5 0 9-4 12 2-5 0-11-4-13z" fill="#ffce3a" />
				<path d="M3 13c1 6 5 9 10 9 4 0 7-2 8-5-5 4-13 1-13-5-2 0-4 0-5 1z" fill="#e6324b" />
				<circle cx="13" cy="12.500" r="4.500" fill="#7a3fd6" />
			</>
		),
	},
	{
		name: "Maple",
		art: (
			<>
				<path d="M9 1h14v16H9z" fill="#dfe6f2" />
				<path d="M9 6h14M9 11h14M14 1v16M19 1v16" stroke="#a9b8d2" />
				<circle cx="10" cy="14" r="9" fill="#cf4848" />
				<path d="M5 18v-7q2-3 5 0v7m0-7q3-3 5 0v7M3 14h14" fill="none" stroke="#f5cfcf" strokeWidth="1.500" />
			</>
		),
	},
	{
		name: "R",
		art: (
			<>
				<circle cx="12" cy="12" r="11.500" fill="#74a6d6" />
				<text x="12" y="17" textAnchor="middle" className="font-['Liberation_Serif',serif] text-[14px] font-bold" fill="#fff">R</text>
			</>
		),
	},
	{
		name: "JMP",
		open: true,
		active: true,
		art: (
			<>
				<path d="M2 3h12v4H2zM2 8h9v4H2zM2 13h13v4H2zM2 18h8v3H2z" fill="#39d353" />
				<path d="M12 8c3-3 6-1 6 2l5-1-3 4c-3 4-7 3-9 1z" fill="#1f7f9c" />
				<circle cx="14" cy="8" r="2" fill="#0b3a2c" />
			</>
		),
	},
	{
		name: "OBS Studio",
		open: true,
		art: (
			<>
				<circle cx="12" cy="12" r="10.500" fill="#1f1f21" stroke="#c9c9c9" strokeWidth="1.500" />
				<path d="M9 4c-1 4 1 6 4 7M20 13c-3-3-6-2-8 0M8 19c4 0 5-3 4-7" fill="none" stroke="#c9c9c9" strokeWidth="2" />
				<circle cx="12" cy="12" r="2" fill="#c9c9c9" />
			</>
		),
	},
];

function Taskbar() {
	return (
		<footer className="flex h-[38px] shrink-0 items-center border-t border-black bg-[#222627] text-white">
			<button type="button" aria-label="Start" className="flex h-full w-[46px] shrink-0 items-center justify-center">
				<svg viewBox="0 0 16 16" className="h-[16px] w-[16px]" fill="#fff">
					<path d="M0 2.300 6.800 1.300v6.300H0zM7.700 1.200 16 0v7.600H7.700zM0 8.400h6.800v6.300L0 13.700zM7.700 8.400H16V16l-8.300-1.200z" />
				</svg>
			</button>
			<label className="flex h-full w-[322px] shrink-0 items-center gap-[11px] border border-[#555] bg-[#313131] pl-[10px]">
				<svg viewBox="0 0 16 16" fill="none" stroke="#ddd" className="h-[16px] w-[16px]">
					<circle cx="10" cy="6" r="5" strokeWidth="1.300" />
					<path d="m6.500 9.500-6 6" strokeWidth="1.500" />
				</svg>
				<input aria-label="Search" placeholder="Type here to search" className="min-w-0 flex-1 bg-transparent text-[13px] outline-none placeholder:text-[#c4c4c4]" />
			</label>
			<ul className="flex h-full shrink-0">
				{APPS.map((app) => (
					<li key={app.name} className="flex w-[46px] justify-center">
						<button
							type="button"
							aria-label={app.name}
							className={clsx(
								"flex h-full items-center justify-center border-b-2",
								app.open ? "border-[#7fd6cb]" : "border-transparent",
								app.active ? "w-[42px] bg-[#4c5052]" : "w-[38px]",
							)}
						>
							<svg viewBox="0 0 24 24" className="h-[22px] w-[22px] overflow-visible">{app.art}</svg>
						</button>
					</li>
				))}
			</ul>
			<div className="ml-auto flex h-full items-center">
				<svg viewBox="0 0 20 18" className="h-[18px] w-[20px]">
					<circle cx="9" cy="9" r="8.500" fill="#f7c23c" />
					<path d="M8 14a3 3 0 0 1 1-5.500 4 4 0 0 1 7 1 2.500 2.500 0 0 1 1 4.500z" fill="#cfe6f5" />
				</svg>
				<span className="ml-[8px] text-[13px]">20°C</span>
				<svg viewBox="0 0 12 8" fill="none" stroke="#ddd" className="ml-[18px] h-[8px] w-[12px]"><path d="m1 7 5-5 5 5" strokeWidth="1.300" /></svg>
				<svg viewBox="0 0 16 12" fill="none" stroke="#ddd" className="ml-[16px] h-[12px] w-[16px]">
					<path d="M4.500 4.500h10v6h-10zM15.500 6v3M1 1v3h3V1M2.500 4v4h2" strokeWidth="1.300" />
				</svg>
				<svg viewBox="0 0 16 16" fill="none" stroke="#ddd" className="ml-[18px] h-[16px] w-[16px]">
					<path d="M6 12c-4 2-5-1-3-3s5 0 3 3zm0 0 7-10 2 1.500-7 9c2 0 4-2 6-2" strokeWidth="1.200" />
				</svg>
				<div className="ml-[12px] w-[56px] text-center text-[12px] leading-[17px] whitespace-nowrap">
					<div>8:00 AM</div>
					<div>7/24/2021</div>
				</div>
				<svg viewBox="0 0 24 24" className="mr-[12px] ml-[12px] h-[24px] w-[24px]">
					<path d="M1 2h16v11H9l-4 4v-4H1z" fill="#fff" />
					<path d="M4 5h10M4 8h10" stroke="#222" />
					<circle cx="16" cy="16" r="7" fill="#3b3b3b" stroke="#888" />
					<text x="16" y="20" textAnchor="middle" className="text-[11px]" fill="#fff">3</text>
				</svg>
				<span className="mr-[4px] h-full w-px bg-[#666]" />
			</div>
		</footer>
	);
}

export default function App() {
	return (
		<main className="relative flex h-screen w-full flex-col overflow-hidden bg-black font-['Open_Sans','Noto_Sans',sans-serif]">
			<TableWindow />
			<GraphBuilderWindow />
			<Taskbar />
		</main>
	);
}
